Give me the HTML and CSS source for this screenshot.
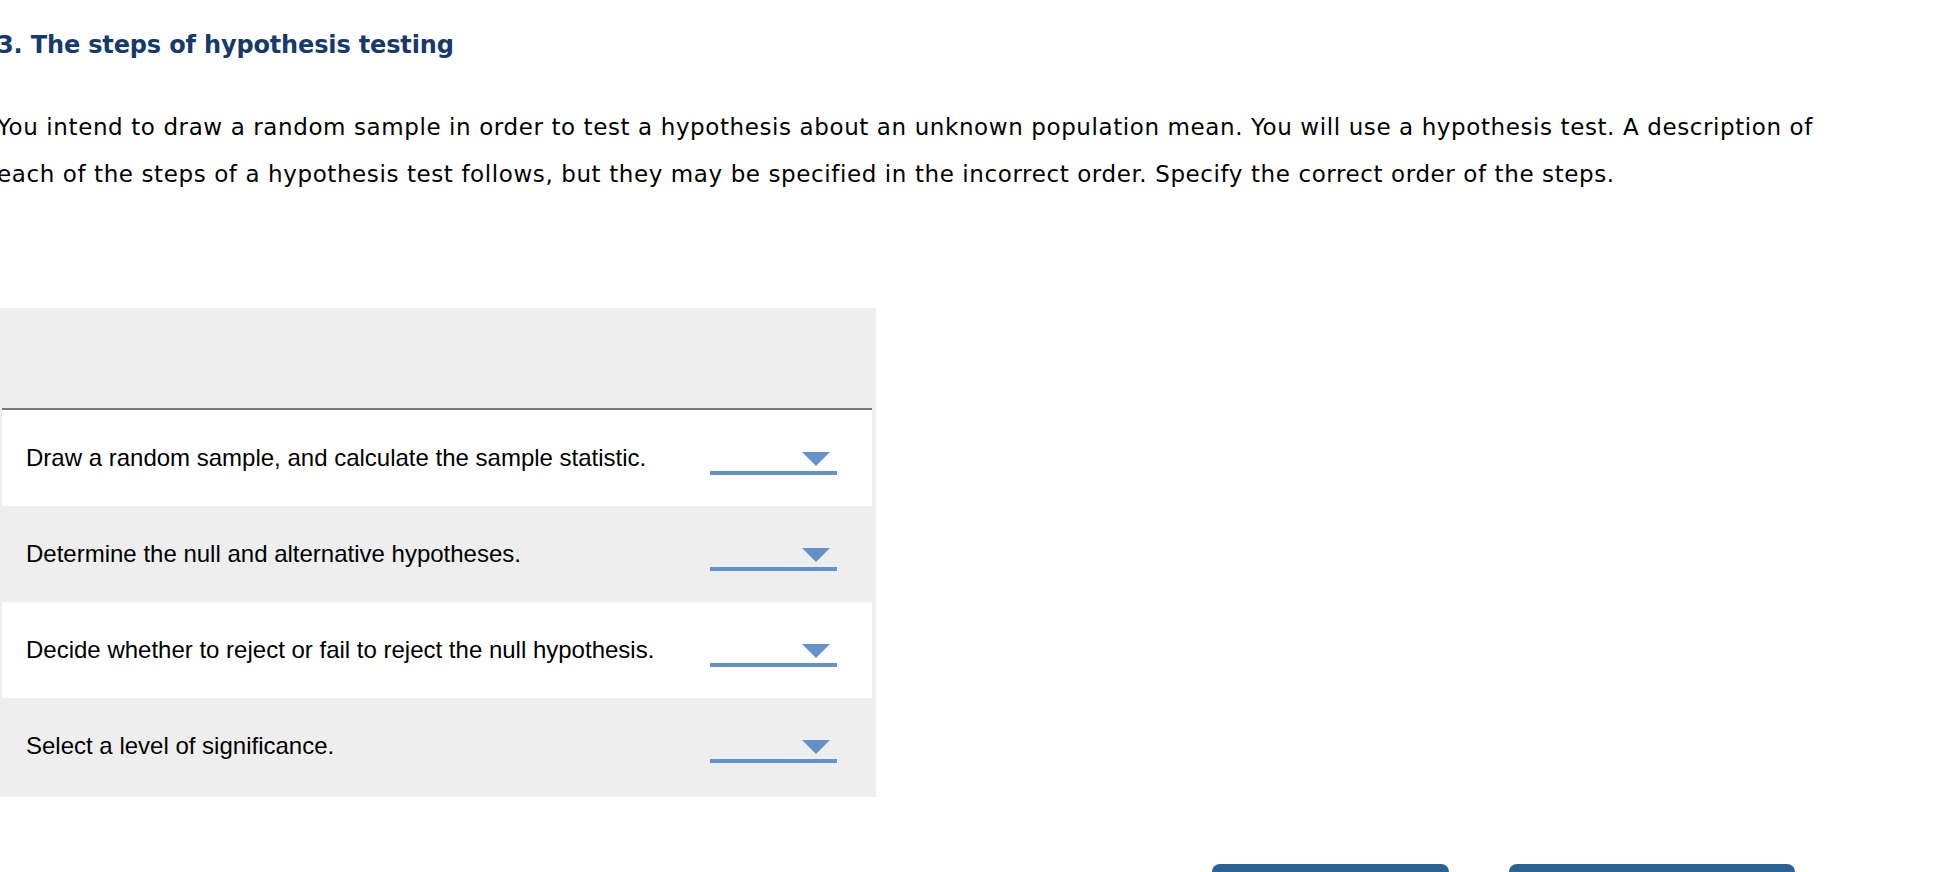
FILE: index.html
```html
<!DOCTYPE html>
<html lang="en">
<head>
    <meta charset="UTF-8">
    <meta name="viewport" content="width=device-width, initial-scale=1.0">
    <title>The steps of hypothesis testing</title>
    <link rel="stylesheet" href="styles.css">
</head>
<body>
    <div class="question">
        <h2 class="question-title">3. The steps of hypothesis testing</h2>

        <p class="question-text">You intend to draw a random sample in order to test a hypothesis about an unknown population mean. You will use a hypothesis test. A description of each of the steps of a hypothesis test follows, but they may be specified in the incorrect order. Specify the correct order of the steps.</p>

        <div class="steps">
            <div class="steps-head"></div>

            <div class="step-row">
                <span class="step-label">Draw a random sample, and calculate the sample statistic.</span>
                <div class="step-select">
                    <svg width="28" height="14" viewBox="0 0 28 14"><polygon points="0,0 28,0 14,14" fill="#6393c5"/></svg>
                </div>
            </div>
            <div class="step-row">
                <span class="step-label">Determine the null and alternative hypotheses.</span>
                <div class="step-select">
                    <svg width="28" height="14" viewBox="0 0 28 14"><polygon points="0,0 28,0 14,14" fill="#6393c5"/></svg>
                </div>
            </div>
            <div class="step-row">
                <span class="step-label">Decide whether to reject or fail to reject the null hypothesis.</span>
                <div class="step-select">
                    <svg width="28" height="14" viewBox="0 0 28 14"><polygon points="0,0 28,0 14,14" fill="#6393c5"/></svg>
                </div>
            </div>
            <div class="step-row">
                <span class="step-label">Select a level of significance.</span>
                <div class="step-select">
                    <svg width="28" height="14" viewBox="0 0 28 14"><polygon points="0,0 28,0 14,14" fill="#6393c5"/></svg>
                </div>
            </div>
        </div>
    </div>

    <div class="actions">
        <button class="btn btn-grade">Grade It Now</button>
        <button class="btn btn-save">Save &amp; Continue</button>
    </div>
</body>
</html>
```

FILE: styles.css
```css
body {
    margin: 0;
    background: #fff;
    color: #000;
    font-family: "DejaVu Sans", Verdana, sans-serif;
}

.question-title {
    margin: 30px 0 0 -3px;
    font-size: 24px;
    line-height: 30px;
    font-weight: bold;
    letter-spacing: -0.15px;
    color: #173a6a;
}

.question-text {
    width: 1850px;
    margin: 44px 0 0 -3px;
    font-size: 23px;
    line-height: 47px;
    letter-spacing: 0.6px;
}

.steps {
    width: 870px;
    margin-top: 110px;
    padding: 0 4px 3px 2px;
    background: #eeeeee;
}

.steps-head {
    height: 100px;
    border-bottom: 2px solid #7a7a7a;
}

.step-row {
    display: flex;
    justify-content: space-between;
    align-items: center;
    height: 96px;
    padding: 0 35px 0 24px;
    font-family: "Liberation Sans", Arial, sans-serif;
    font-size: 24px;
}

.step-row:nth-child(even) { background: #fff; }

.step-select {
    display: flex;
    justify-content: flex-end;
    width: 120px;
    height: 19px;
    margin-top: 11px;
    padding-right: 7px;
    border-bottom: 4px solid #6393c5;
}

.actions {
    display: flex;
    justify-content: flex-end;
    gap: 60px;
    margin-top: 67px;
    padding-right: 139px;
}

.btn {
    padding: 18px 0 14px;
    border: none;
    border-radius: 8px;
    background: #2a6294;
    color: #fff;
    font-family: "DejaVu Sans", Verdana, sans-serif;
    font-size: 18px;
    line-height: 22px;
    cursor: pointer;
}

.btn-grade { width: 237px; }
.btn-save { width: 286px; }
```
